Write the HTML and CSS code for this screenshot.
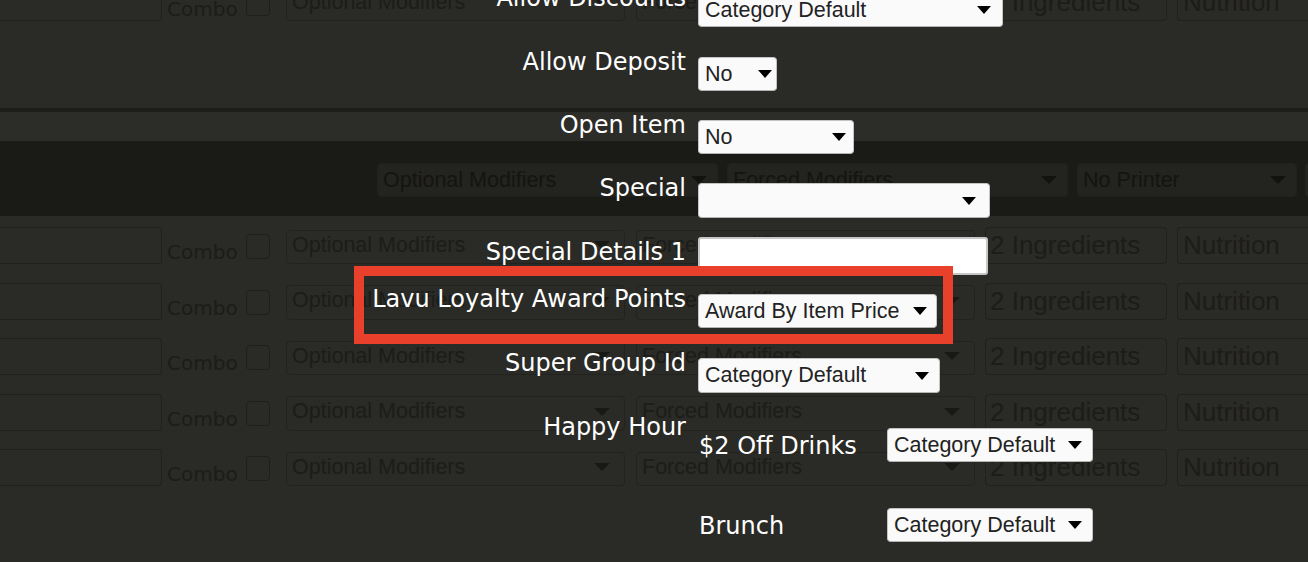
FILE: index.html
```html
<!DOCTYPE html>
<html>
<head>
<meta charset="utf-8">
<link rel="stylesheet" href="styles.css">
</head>
<body>
<div class="page">
  <div class="row first">
    <div class="inp name"></div>
    <span class="combo">Combo</span>
    <span class="chk"></span>
    <div class="dsel opt"><span>Optional Modifiers</span><i class="darr"></i></div>
    <div class="dsel forced"><span>Forced Modifiers</span><i class="darr"></i></div>
    <div class="inp ingr">2 Ingredients</div>
    <div class="inp nutr">Nutrition</div>
  </div>
  <div class="divider"></div>
  <div class="subbar"></div>
  <div class="band">
    <div class="bsel b-opt"><span>Optional Modifiers</span><i class="darr"></i></div>
    <div class="bsel b-forced"><span>Forced Modifiers</span><i class="darr"></i></div>
    <div class="bsel b-printer"><span>No Printer</span><i class="darr"></i></div>
    <div class="bsel b-next"></div>
  </div>
  <div class="rows">
    <div class="row">
      <div class="inp name"></div><span class="combo">Combo</span><span class="chk"></span>
      <div class="dsel opt"><span>Optional Modifiers</span><i class="darr"></i></div>
      <div class="dsel forced"><span>Forced Modifiers</span><i class="darr"></i></div>
      <div class="inp ingr">2 Ingredients</div><div class="inp nutr">Nutrition</div>
    </div>
    <div class="row">
      <div class="inp name"></div><span class="combo">Combo</span><span class="chk"></span>
      <div class="dsel opt"><span>Optional Modifiers</span><i class="darr"></i></div>
      <div class="dsel forced"><span>Forced Modifiers</span><i class="darr"></i></div>
      <div class="inp ingr">2 Ingredients</div><div class="inp nutr">Nutrition</div>
    </div>
    <div class="row">
      <div class="inp name"></div><span class="combo">Combo</span><span class="chk"></span>
      <div class="dsel opt"><span>Optional Modifiers</span><i class="darr"></i></div>
      <div class="dsel forced"><span>Forced Modifiers</span><i class="darr"></i></div>
      <div class="inp ingr">2 Ingredients</div><div class="inp nutr">Nutrition</div>
    </div>
    <div class="row">
      <div class="inp name"></div><span class="combo">Combo</span><span class="chk"></span>
      <div class="dsel opt"><span>Optional Modifiers</span><i class="darr"></i></div>
      <div class="dsel forced"><span>Forced Modifiers</span><i class="darr"></i></div>
      <div class="inp ingr">2 Ingredients</div><div class="inp nutr">Nutrition</div>
    </div>
    <div class="row">
      <div class="inp name"></div><span class="combo">Combo</span><span class="chk"></span>
      <div class="dsel opt"><span>Optional Modifiers</span><i class="darr"></i></div>
      <div class="dsel forced"><span>Forced Modifiers</span><i class="darr"></i></div>
      <div class="inp ingr">2 Ingredients</div><div class="inp nutr">Nutrition</div>
    </div>
  </div>
</div>

<div class="modal">
  <div class="form">
    <div class="lbl">Allow Discounts</div>
    <div class="ctl"><div class="sel s-discount"><span>Category Default</span><i class="arr"></i></div></div>

    <div class="lbl">Allow Deposit</div>
    <div class="ctl"><div class="sel s-deposit"><span>No</span><i class="arr"></i></div></div>

    <div class="lbl">Open Item</div>
    <div class="ctl"><div class="sel s-open"><span>No</span><i class="arr"></i></div></div>

    <div class="lbl">Special</div>
    <div class="ctl"><div class="sel s-special"><span></span><i class="arr"></i></div></div>

    <div class="lbl">Special Details 1</div>
    <div class="ctl ctl-input"><div class="txt"></div></div>

    <div class="lbl">Lavu Loyalty Award Points</div>
    <div class="ctl"><div class="sel s-lavu"><span>Award By Item Price</span><i class="arr"></i></div></div>

    <div class="lbl">Super Group Id</div>
    <div class="ctl"><div class="sel s-super"><span>Category Default</span><i class="arr"></i></div></div>

    <div class="lbl">Happy Hour</div>
    <div class="ctl ctl-nested">
      <div class="hh">
        <div class="hh-name">$2 Off Drinks</div>
        <div class="sel s-hh"><span>Category Default</span><i class="arr"></i></div>
        <div class="hh-name">Brunch</div>
        <div class="sel s-hh"><span>Category Default</span><i class="arr"></i></div>
      </div>
    </div>
  </div>
</div>

<div class="highlight"></div>
</body>
</html>
```

FILE: styles.css
```css
html, body {
  margin: 0;
  padding: 0;
}
body {
  width: 1308px;
  height: 562px;
  overflow: hidden;
  background: #2a2a26;
  position: relative;
  font-family: "Liberation Sans", Arial, sans-serif;
}

/* ---------- dimmed background page ---------- */
.page {
  display: flex;
  flex-direction: column;
}
.row {
  display: flex;
  align-items: flex-end;
  height: 37px;
  flex: none;
}
.row.first {
  margin-top: -16px;
}
.rows {
  display: flex;
  flex-direction: column;
  gap: 18.5px;
  padding-top: 11px;
}
.inp {
  box-sizing: border-box;
  height: 37px;
  border: 1px solid #20201d;
  border-radius: 4px;
  background: #2a2a26;
  color: #1c1c19;
  font-size: 26px;
  display: flex;
  align-items: center;
  padding-left: 4px;
  white-space: nowrap;
  overflow: hidden;
  flex: none;
}
.name {
  width: 162px;
  border-left: none;
  border-top-left-radius: 0;
  border-bottom-left-radius: 0;
}
.combo {
  width: 79px;
  margin-left: 5px;
  font-family: "DejaVu Sans", Verdana, sans-serif;
  font-size: 20px;
  color: #1c1c19;
  flex: none;
}
.chk {
  box-sizing: border-box;
  width: 24px;
  height: 25px;
  margin-bottom: 5px;
  border: 1.5px solid #1f1f1c;
  border-radius: 4px;
  flex: none;
}
.dsel {
  box-sizing: border-box;
  height: 34.5px;
  border: 1px solid #22221f;
  border-radius: 4px;
  background: #2a2a26;
  color: #1c1c19;
  font-size: 21.5px;
  display: flex;
  align-items: center;
  justify-content: space-between;
  padding: 0 14px 3px 5px;
  flex: none;
  white-space: nowrap;
}
.opt {
  width: 339px;
  margin-left: 16px;
}
.forced {
  width: 339px;
  margin-left: 11px;
}
.ingr {
  width: 182px;
  margin-left: 10px;
}
.nutr {
  width: 131px;
  margin-left: 10px;
  padding-left: 5px;
  border-right: none;
  border-top-right-radius: 0;
  border-bottom-right-radius: 0;
}
.darr {
  width: 0;
  height: 0;
  border-left: 8px solid transparent;
  border-right: 8px solid transparent;
  border-top: 8px solid #181815;
  flex: none;
}

.divider {
  margin-top: 87px;
  height: 4px;
  background: #1d1d1a;
}
.subbar {
  height: 29px;
  background: #2c2c28;
}
.band {
  height: 75px;
  box-sizing: border-box;
  background: #1a1a16;
  display: flex;
  align-items: flex-start;
  padding-top: 22px;
  padding-left: 377px;
  gap: 9px;
}
.bsel {
  box-sizing: border-box;
  height: 34px;
  border-radius: 4px;
  background: #23231f;
  border: 1px solid #20201c;
  color: #141411;
  font-size: 21.5px;
  display: flex;
  align-items: center;
  justify-content: space-between;
  padding: 0 10px 0 5px;
  flex: none;
  white-space: nowrap;
}
.bsel .darr {
  border-top-color: #121210;
}
.b-opt, .b-forced {
  width: 341px;
}
.b-printer {
  width: 220px;
}
.b-next {
  width: 3px;
  margin-left: -1px;
  padding: 0;
  border-right: none;
  border-top-right-radius: 0;
  border-bottom-right-radius: 0;
}

/* ---------- modal form (overlay) ---------- */
.modal {
  position: absolute;
  left: 0;
  top: -16px;
  width: 1308px;
}
.form {
  display: grid;
  grid-template-columns: 686px 1fr;
  grid-template-rows: 64px 63px 63px 64px 47px 64px 64px auto;
  column-gap: 12px;
  align-items: start;
}
.lbl {
  font-family: "DejaVu Sans", Verdana, sans-serif;
  font-size: 24px;
  line-height: 28px;
  color: #ffffff;
  text-align: right;
  white-space: nowrap;
}
.ctl {
  margin-top: 9px;
}
.ctl-input {
  margin-top: -1px;
}
.ctl-nested {
  margin-top: 15px;
}
.sel {
  box-sizing: border-box;
  height: 34px;
  background: #fafafa;
  border: 1px solid #c4c4c4;
  border-bottom-color: #b4b4b4;
  border-radius: 4px;
  color: #222222;
  font-size: 21.5px;
  display: flex;
  align-items: center;
  justify-content: space-between;
  padding: 0 10px 0 6px;
  white-space: nowrap;
}
.arr {
  width: 0;
  height: 0;
  border-left: 7.5px solid transparent;
  border-right: 7.5px solid transparent;
  border-top: 8px solid #000000;
  flex: none;
}
.s-discount { width: 305px; padding-right: 11px; }
.s-deposit { width: 79px; padding-right: 4px; }
.s-open { width: 156px; padding-right: 7px; }
.s-special { width: 292px; height: 35px; padding-right: 13px; }
.s-lavu { width: 239px; padding-right: 9px; }
.s-super { width: 242px; height: 35px; padding-right: 10px; }
.s-hh { width: 206px; padding-right: 10px; }

.txt {
  box-sizing: border-box;
  width: 290px;
  height: 38px;
  background: #ffffff;
  border: 2px solid #c6c6c6;
  border-radius: 3px;
}

.hh {
  display: grid;
  grid-template-columns: 189px auto;
  grid-auto-rows: 80px;
  align-items: start;
}
.hh-name {
  font-family: "DejaVu Sans", Verdana, sans-serif;
  font-size: 24px;
  line-height: 28px;
  color: #ffffff;
  margin-top: 4px;
  padding-left: 1px;
  white-space: nowrap;
}

/* ---------- annotation ---------- */
.highlight {
  position: absolute;
  left: 354px;
  top: 266px;
  width: 599px;
  height: 78px;
  box-sizing: border-box;
  border: 10px solid #e8402a;
}
```
